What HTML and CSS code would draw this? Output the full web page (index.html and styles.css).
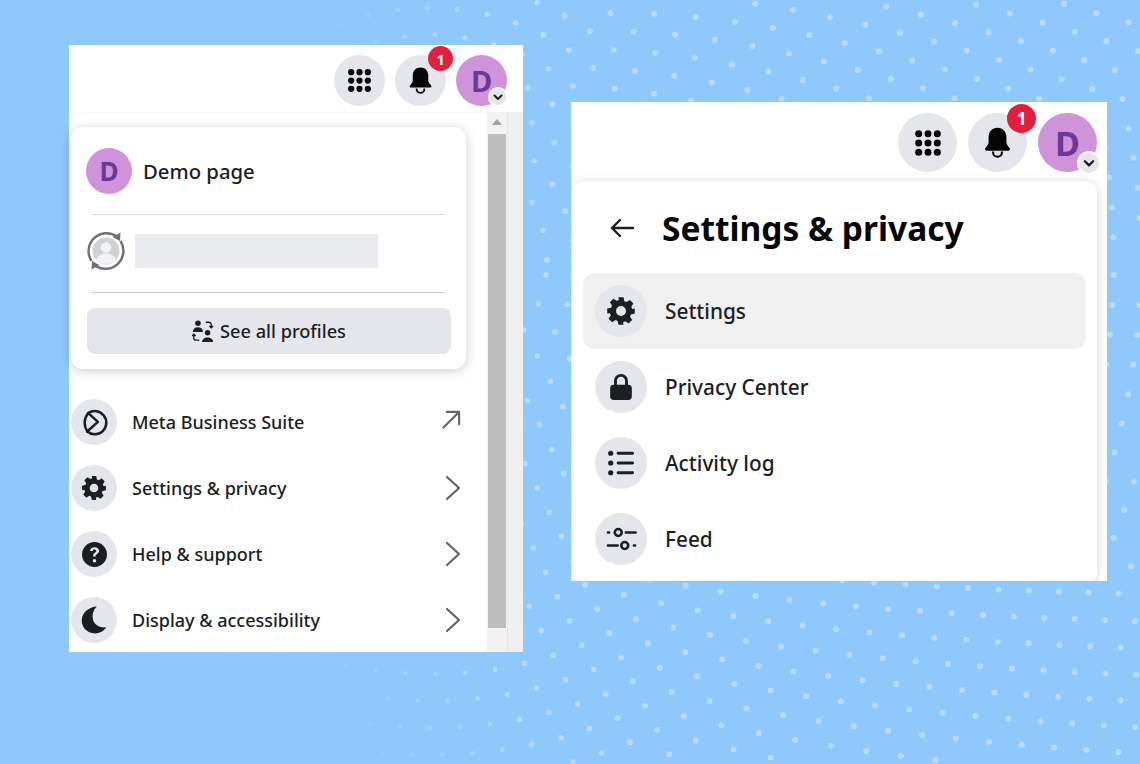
FILE: index.html
```html
<!DOCTYPE html>
<html lang="en">
<head>
  <meta charset="UTF-8">
  <title>Demo page - account menu</title>
  <link rel="stylesheet" href="styles.css">
</head>
<body>

<svg class="dots" id="dots" width="1140" height="764" aria-hidden="true"></svg>

<svg class="defs" width="0" height="0" aria-hidden="true">
  <symbol id="i-grid" viewBox="0 0 24 24">
    <g fill="currentColor">
      <circle cx="4" cy="4" r="3"/><circle cx="12" cy="4" r="3"/><circle cx="20" cy="4" r="3"/>
      <circle cx="4" cy="12" r="3"/><circle cx="12" cy="12" r="3"/><circle cx="20" cy="12" r="3"/>
      <circle cx="4" cy="20" r="3"/><circle cx="12" cy="20" r="3"/><circle cx="20" cy="20" r="3"/>
    </g>
  </symbol>
  <symbol id="i-bell" viewBox="0 0 24 24">
    <path fill="currentColor" d="M12 .5c-4.200 0-6.900 3.100-6.900 7.300v3.900c0 1.800-1 3-2.400 4.500-.9 1-.3 2.100 1 2.100h16.600c1.300 0 1.900-1.100 1-2.100-1.400-1.500-2.400-2.700-2.400-4.500V7.800C18.900 3.600 16.200.5 12 .5z"/>
    <path fill="none" stroke="currentColor" stroke-width="1.600" d="M8.600 19v1a3.400 3 0 0 0 6.800 0v-1"/>
  </symbol>
  <symbol id="i-chev-down" viewBox="0 0 12 12">
    <path fill="none" stroke="currentColor" stroke-width="2" stroke-linecap="round" stroke-linejoin="round" d="M2.500 4.500 6 8l3.500-3.500"/>
  </symbol>
  <symbol id="i-gear" viewBox="0 0 24 24">
    <path fill="currentColor" fill-rule="evenodd" d="M10 1h4l.7 3.100 1.700.7 2.700-1.700 2.800 2.800-1.700 2.700.7 1.700L23 10v4l-3.100.7-.7 1.700 1.700 2.700-2.800 2.800-2.700-1.700-1.700.7L14 23h-4l-.7-3.100-1.700-.7-2.700 1.700-2.800-2.800 1.700-2.700-.7-1.700L1 14v-4l3.100-.7.7-1.700-1.700-2.700 2.800-2.800 2.700 1.700 1.700-.7zM12 8a4 4 0 1 0 0 8 4 4 0 0 0 0-8z"/>
  </symbol>
  <symbol id="i-suite" viewBox="0 0 24 24">
    <g fill="none" stroke="currentColor" stroke-width="2.200" stroke-linecap="round" stroke-linejoin="round">
      <path d="M6.500 3.600A10.300 10.300 0 1 1 5.500 20"/>
      <path d="M6.500 3.600 15 11.500 5.500 20"/>
      <path d="M6.500 3.600Q.5 11 5.500 20"/>
    </g>
  </symbol>
  <symbol id="i-help" viewBox="0 0 24 24">
    <path fill="currentColor" fill-rule="evenodd" d="M12 0a12 12 0 1 1 0 24 12 12 0 0 1 0-24zm0 16.300a1.700 1.700 0 1 0 0 3.400 1.700 1.700 0 0 0 0-3.400zM12 5c-2.400 0-4.200 1.300-4.400 3.600h2.600c.1-.9.800-1.400 1.800-1.400s1.700.6 1.700 1.400c0 .7-.4 1.100-1.300 1.700-1.200.8-1.700 1.600-1.700 2.900v.6h2.500v-.4c0-.8.300-1.100 1.300-1.800 1.200-.8 1.900-1.700 1.900-3.100C16.400 6.400 14.600 5 12 5z"/>
  </symbol>
  <symbol id="i-moon" viewBox="0 0 24 24">
    <path fill="currentColor" d="M14.500.5C8 .8 1.500 5.500 1.500 12.500c0 6.500 5.200 11 11.300 11 4.200 0 7.800-2.100 9.700-5.200-6.200.8-11.700-2.900-11.700-8.800 0-3.700 1.200-6.800 3.700-9z"/>
  </symbol>
  <symbol id="i-lock" viewBox="0 0 24 24">
    <path fill="currentColor" fill-rule="evenodd" d="M12 0c3.700 0 6.400 2.700 6.400 6.400V10h.600c1.700 0 3 1.300 3 3v8c0 1.700-1.300 3-3 3H5c-1.700 0-3-1.300-3-3v-8c0-1.700 1.300-3 3-3h.6V6.400C5.600 2.700 8.300 0 12 0zm0 2.600c-2.200 0-3.800 1.600-3.800 3.800V10h7.600V6.400c0-2.200-1.600-3.800-3.800-3.800z"/>
  </symbol>
  <symbol id="i-list" viewBox="0 0 24 24">
    <g fill="currentColor">
      <circle cx="2.500" cy="3" r="2.400"/><circle cx="2.500" cy="12" r="2.400"/><circle cx="2.500" cy="21" r="2.400"/>
      <rect x="8" y="1.700" width="16" height="2.600" rx="1.300"/>
      <rect x="8" y="10.700" width="16" height="2.600" rx="1.300"/>
      <rect x="8" y="19.700" width="16" height="2.600" rx="1.300"/>
    </g>
  </symbol>
  <symbol id="i-sliders" viewBox="0 0 28 24">
    <g fill="none" stroke="currentColor" stroke-width="2.400" stroke-linecap="round">
      <circle cx="11" cy="6" r="3.200"/>
      <circle cx="17" cy="18" r="3.200"/>
      <path d="M1.500 6h1M18 6h9M1.500 18h9M25.500 18h1"/>
    </g>
  </symbol>
  <symbol id="i-people" viewBox="0 0 24 24">
    <g fill="currentColor">
      <circle cx="6.500" cy="3.500" r="3"/>
      <path d="M1 13c0-3 2-5 5.500-5S12 10 12 13z"/>
      <circle cx="17" cy="14" r="3"/>
      <path d="M11 24c0-3 2.500-5 6-5s6 2 6 5z"/>
    </g>
    <g fill="none" stroke="currentColor" stroke-width="1.500">
      <path d="M15 2.500h3.500a2.500 2.500 0 0 1 2.500 2.500v3M19 6.500 21 8.500 23 6.500"/>
      <path d="M8 22H4.500A2.500 2.500 0 0 1 2 19.500V16M0 17.500 2 15.500 4 17.500"/>
    </g>
  </symbol>
  <symbol id="i-profile" viewBox="0 0 40 40">
    <circle cx="20" cy="20" r="13.500" fill="#cfd1d5"/>
    <circle cx="20" cy="16.500" r="5.200" fill="#f1f2f4"/>
    <path fill="#f1f2f4" d="M10 29c1.500-4.500 5.500-6.500 10-6.500S28.500 24.500 30 29c-2.500 2.500-6 4-10 4s-7.500-1.500-10-4z"/>
    <g fill="none" stroke="#6f7175" stroke-width="2.400">
      <path d="M31 5.500A18 18 0 0 0 5.500 30"/>
      <path d="M9 34.500A18 18 0 0 0 34.500 10"/>
    </g>
    <path fill="#6f7175" d="M34.500 1.500 34 10l-7.500-4zM5.500 38.500 6 30l7.500 4z"/>
  </symbol>
</svg>

<main class="stage">

  <section class="window window-left">
    <header class="topbar topbar-small">
      <span class="round"><svg class="ico-grid"><use href="#i-grid"/></svg></span>
      <span class="round">
        <svg class="ico-bell"><use href="#i-bell"/></svg>
        <span class="badge">1</span>
      </span>
      <span class="round avatar">D
        <span class="caret"><svg><use href="#i-chev-down"/></svg></span>
      </span>
    </header>

    <div class="split">
      <div class="pane">
        <div class="card">
          <div class="page-row">
            <span class="avatar avatar-page">D</span>
            <span class="page-name">Demo page</span>
          </div>
          <hr class="rule">
          <div class="profile-row">
            <svg class="ico-profile"><use href="#i-profile"/></svg>
            <span class="redacted"></span>
          </div>
          <hr class="rule rule-dark">
          <div class="see-all">
            <svg class="ico-people"><use href="#i-people"/></svg>
            <span>See all profiles</span>
          </div>
        </div>

        <ul class="menu">
          <li class="menu-item">
            <span class="disc"><svg class="ico-suite"><use href="#i-suite"/></svg></span>
            <span class="menu-label">Meta Business Suite</span>
            <svg class="go go-out" viewBox="0 0 20 20"><path d="M1.500 18.500 18 2M5 2h13v13"/></svg>
          </li>
          <li class="menu-item">
            <span class="disc"><svg class="ico-md"><use href="#i-gear"/></svg></span>
            <span class="menu-label">Settings &amp; privacy</span>
            <svg class="go" viewBox="0 0 16 26"><path d="M2 2l12 11L2 24"/></svg>
          </li>
          <li class="menu-item">
            <span class="disc"><svg class="ico-help"><use href="#i-help"/></svg></span>
            <span class="menu-label">Help &amp; support</span>
            <svg class="go" viewBox="0 0 16 26"><path d="M2 2l12 11L2 24"/></svg>
          </li>
          <li class="menu-item">
            <span class="disc"><svg class="ico-moon"><use href="#i-moon"/></svg></span>
            <span class="menu-label">Display &amp; accessibility</span>
            <svg class="go" viewBox="0 0 16 26"><path d="M2 2l12 11L2 24"/></svg>
          </li>
        </ul>
      </div>

      <div class="rail">
        <div class="track">
          <span class="rail-arrow"></span>
          <span class="thumb"></span>
        </div>
        <div class="rail-edge"></div>
      </div>
    </div>
  </section>

  <section class="window window-right">
    <header class="topbar topbar-big">
      <span class="round"><svg class="ico-grid"><use href="#i-grid"/></svg></span>
      <span class="round">
        <svg class="ico-bell"><use href="#i-bell"/></svg>
        <span class="badge">1</span>
      </span>
      <span class="round avatar">D
        <span class="caret"><svg><use href="#i-chev-down"/></svg></span>
      </span>
    </header>

    <div class="panel">
      <div class="panel-head">
        <svg class="back" viewBox="0 0 24 20"><path d="M23 10H2M10 2l-8 8 8 8"/></svg>
        <h2>Settings &amp; privacy</h2>
      </div>
      <ul class="options">
        <li class="option option-active">
          <span class="disc"><svg class="ico-gear"><use href="#i-gear"/></svg></span>
          <span>Settings</span>
        </li>
        <li class="option">
          <span class="disc"><svg><use href="#i-lock"/></svg></span>
          <span>Privacy Center</span>
        </li>
        <li class="option">
          <span class="disc"><svg><use href="#i-list"/></svg></span>
          <span>Activity log</span>
        </li>
        <li class="option">
          <span class="disc"><svg class="ico-wide"><use href="#i-sliders"/></svg></span>
          <span>Feed</span>
        </li>
      </ul>
    </div>
  </section>

</main>

<script src="script.js"></script>
</body>
</html>
```

FILE: styles.css
```css
* { box-sizing: border-box; }
html, body { height: 100%; }
body {
  margin: 0;
  width: 1140px;
  height: 764px;
  overflow: hidden;
  position: relative;
  background: #8fc8fa;
  color: #1c1e21;
  font-family: "Noto Sans", "Open Sans", sans-serif;
  font-weight: 500;
}
.dots { position: absolute; top: 0; left: 0; }
.defs { position: absolute; }
ul { list-style: none; margin: 0; padding: 0; }

.stage {
  position: relative;
  display: flex;
  align-items: flex-start;
  gap: 48px;
  padding-left: 69px;
}
.window { background: #fff; }
.window-left { width: 454px; height: 607px; margin-top: 45px; }
.window-right { width: 536px; height: 479px; margin-top: 102px; overflow: hidden; }

/* top bars */
.topbar { display: flex; justify-content: flex-end; }
.round {
  position: relative;
  display: flex;
  align-items: center;
  justify-content: center;
  border-radius: 50%;
  background: #e4e6eb;
  color: #050505;
}
.avatar {
  display: flex;
  align-items: center;
  justify-content: center;
  border-radius: 50%;
  background: #cf93d9;
  color: #6b3a96;
  font-weight: 700;
}
.badge {
  position: absolute;
  display: flex;
  align-items: center;
  justify-content: center;
  border-radius: 50%;
  background: #e41e3f;
  color: #fff;
  font-weight: 700;
}
.caret {
  position: absolute;
  display: flex;
  align-items: center;
  justify-content: center;
  border-radius: 50%;
  background: #e4e6eb;
  border: 2px solid #fff;
  color: #1c1e21;
}

.topbar-small { height: 67px; padding: 10px 16px 0 0; gap: 10px; }
.topbar-small .round { width: 51px; height: 51px; }
.topbar-small .avatar { font-size: 29px; }
.topbar-small .ico-grid { width: 25px; height: 25px; }
.topbar-small .ico-bell { width: 27px; height: 27px; }
.topbar-small .badge { width: 25px; height: 25px; top: -9px; right: -7px; font-size: 15px; }
.topbar-small .caret { width: 20px; height: 20px; right: -1px; bottom: -1px; }
.topbar-small .caret svg { width: 12px; height: 12px; }

.topbar-big { height: 79px; padding: 11px 10px 0 0; gap: 11px; }
.topbar-big .round { width: 59px; height: 59px; }
.topbar-big .avatar { font-size: 34px; }
.topbar-big .ico-grid { width: 28px; height: 28px; }
.topbar-big .ico-bell { width: 31px; height: 31px; }
.topbar-big .badge { width: 29px; height: 29px; top: -9px; right: -9px; font-size: 17px; }
.topbar-big .caret { width: 24px; height: 24px; right: -4px; bottom: -3px; }
.topbar-big .caret svg { width: 14px; height: 14px; }

/* left window */
.split { display: flex; height: 540px; }
.pane { width: 418px; padding: 15px 0 0 2px; border-top: 1px solid #f8f8f8; }
.card {
  width: 395px;
  height: 242px;
  margin-top: -1px;
  padding: 21px 16px 15px 15px;
  border-radius: 12px;
  background: #fff;
  box-shadow: 0 2px 12px rgba(0, 0, 0, .2);
}
.page-row { display: flex; align-items: center; gap: 11px; height: 46px; }
.avatar-page { width: 46px; height: 46px; font-size: 26px; }
.page-name { font-size: 20.300px; }
.rule { margin: 20px 5px 0 6px; border: 0; border-top: 1px solid #dcdde0; }
.rule-dark { margin-top: 0; border-top-color: #c9cacd; }
.profile-row { display: flex; align-items: center; gap: 9px; height: 77px; padding-bottom: 6px; }
.ico-profile { width: 40px; height: 40px; }
.redacted { width: 243px; height: 34px; background: #e9ebee; }
.see-all {
  display: flex;
  align-items: center;
  justify-content: center;
  gap: 6px;
  width: 364px;
  height: 46px;
  margin: 15px 0 0 1px;
  border-radius: 8px;
  background: #e4e6eb;
  font-size: 18.200px;
}
.ico-people { width: 22px; height: 22px; }

.menu { margin-top: 20px; }
.menu-item { display: flex; align-items: center; height: 66px; padding-right: 26px; }
.disc {
  display: flex;
  align-items: center;
  justify-content: center;
  flex: none;
  border-radius: 50%;
  background: #e4e6eb;
  color: #1c1e21;
}
.menu-item .disc { width: 46px; height: 46px; }
.ico-md { width: 26px; height: 26px; }
.ico-help { width: 25px; height: 25px; }
.ico-suite { width: 27px; height: 27px; }
.ico-moon { width: 28px; height: 28px; }
.menu-label { flex: 1; margin-left: 15px; font-size: 18px; }
.go { width: 16px; height: 28px; fill: none; stroke: #65676b; stroke-width: 2.300; stroke-linecap: round; stroke-linejoin: round; }
.go-out { width: 19px; height: 19px; margin-top: -6px; }

.rail { display: flex; width: 36px; background: #f1f1f1; }
.track { position: relative; width: 20px; padding: 22px 1px 0 1px; }
.rail-arrow {
  position: absolute;
  top: 7px;
  left: 5px;
  border-left: 5px solid transparent;
  border-right: 5px solid transparent;
  border-bottom: 6px solid #a3a3a3;
}
.thumb { display: block; height: 494px; background: #bdbdbd; }
.rail-edge { flex: 1; background: #f0eeee; border-left: 1px solid #e6e6e6; }

/* right window */
.panel {
  width: 525px;
  height: 404px;
  margin-left: 1px;
  border-radius: 12px;
  background: #fff;
  box-shadow: 0 1px 10px rgba(0, 0, 0, .16);
  overflow: hidden;
}
.panel-head { display: flex; align-items: center; height: 92px; padding: 2px 0 0 38px; }
.back { width: 24px; height: 20px; fill: none; stroke: #1c1e21; stroke-width: 2.400; stroke-linecap: round; stroke-linejoin: round; }
.panel-head h2 { margin: 0 0 0 28px; font-size: 33.500px; font-weight: 700; color: #050505; }
.options { padding: 0 11px; }
.option {
  display: flex;
  align-items: center;
  gap: 18px;
  height: 76px;
  padding-left: 12px;
  border-radius: 12px;
  font-size: 20.800px;
}
.option-active { background: #f0f0f1; }
.option .disc { width: 52px; height: 52px; }
.option svg { width: 26px; height: 26px; }
.option .ico-gear { width: 30px; height: 30px; }
.option .ico-wide { width: 31px; height: 26px; }
```

FILE: script.js
```js
// background dots, rings around one point, fading out to the left
const dots = document.getElementById("dots");
const cx = 430, cy = 260;
let out = "";

for (let r = 90; r < 950; r += 27) {
  const step = 30 / r;
  for (let a = (r % 54 ? step / 2 : 0); a < Math.PI * 2; a += step) {
    const x = cx + Math.cos(a) * r;
    const y = cy + Math.sin(a) * r;
    if (x < 0 || x > 1140 || y < 0 || y > 764) continue;
    const edge = 300 + Math.max(0, y - 640) * 0.4;
    const o = Math.min(0.36, (x - edge) / 500);
    if (o <= 0.04) continue;
    const size = 1.8 + Math.min(1.2, (x - edge) / 250);
    out += `<circle cx="${x.toFixed(1)}" cy="${y.toFixed(1)}" r="${size.toFixed(1)}" fill="#fff" fill-opacity="${o.toFixed(2)}"/>`;
  }
}
dots.innerHTML = out;
```
